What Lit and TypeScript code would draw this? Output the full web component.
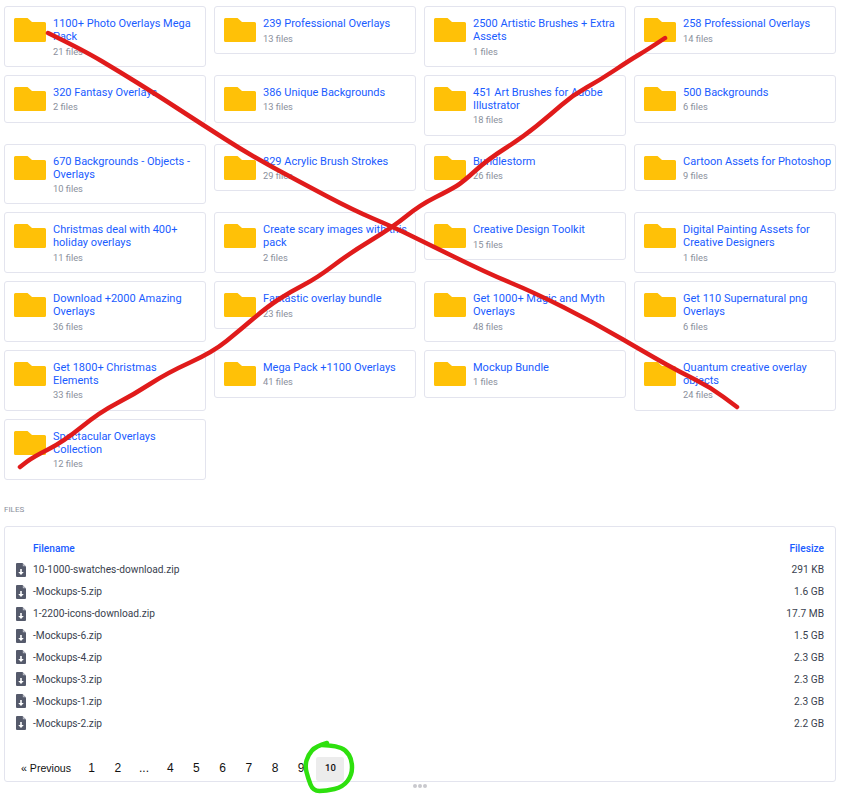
import { LitElement, html, css, svg } from "lit";
import { customElement } from "lit/decorators.js";

const folders: [string, number][] = [
  ["1100+ Photo Overlays Mega Pack", 21],
  ["239 Professional Overlays", 13],
  ["2500 Artistic Brushes + Extra Assets", 1],
  ["258 Professional Overlays", 14],
  ["320 Fantasy Overlays", 2],
  ["386 Unique Backgrounds", 13],
  ["451 Art Brushes for Adobe Illustrator", 18],
  ["500 Backgrounds", 6],
  ["670 Backgrounds - Objects - Overlays", 10],
  ["829 Acrylic Brush Strokes", 29],
  ["Bundlestorm", 26],
  ["Cartoon Assets for Photoshop", 9],
  ["Christmas deal with 400+ holiday overlays", 11],
  ["Create scary images with this pack", 2],
  ["Creative Design Toolkit", 15],
  ["Digital Painting Assets for Creative Designers", 1],
  ["Download +2000 Amazing Overlays", 36],
  ["Fantastic overlay bundle", 23],
  ["Get 1000+ Magic and Myth Overlays", 48],
  ["Get 110 Supernatural png Overlays", 6],
  ["Get 1800+ Christmas Elements", 33],
  ["Mega Pack +1100 Overlays", 41],
  ["Mockup Bundle", 1],
  ["Quantum creative overlay objects", 24],
  ["Spectacular Overlays Collection", 12],
];

const files: [string, string][] = [
  ["10-1000-swatches-download.zip", "291 KB"],
  ["-Mockups-5.zip", "1.6 GB"],
  ["1-2200-icons-download.zip", "17.7 MB"],
  ["-Mockups-6.zip", "1.5 GB"],
  ["-Mockups-4.zip", "2.3 GB"],
  ["-Mockups-3.zip", "2.3 GB"],
  ["-Mockups-1.zip", "2.3 GB"],
  ["-Mockups-2.zip", "2.2 GB"],
];

const pages = ["1", "2", "...", "4", "5", "6", "7", "8", "9"];

// hand drawn marks on top of the page
const redA = [[48,33],[83,50],[120,72],[157,95],[200,123],[250,155],[300,182],[353,210],[393,227],[420,240],[487,273],[533,292],[593,322],[653,357],[680,372],[710,387],[737,407]];
const redB = [[665,38],[647,50],[630,60],[600,80],[573,95],[550,115],[523,137],[487,160],[463,182],[450,190],[420,205],[393,227],[350,253],[317,278],[290,292],[267,307],[240,330],[213,352],[167,373],[133,395],[100,412],[63,442],[33,457],[20,467]];
const green = [[327,743],[316,746],[308,755],[305,766],[308,778],[313,791],[326,791],[343,787],[352,775],[352,760],[346,750],[336,746],[322,745]];

function smooth(pts: number[][]) {
  let d = `M${pts[0][0]} ${pts[0][1]}`;
  for (let i = 1; i < pts.length - 1; i++) {
    const mx = (pts[i][0] + pts[i + 1][0]) / 2;
    const my = (pts[i][1] + pts[i + 1][1]) / 2;
    d += ` Q${pts[i][0]} ${pts[i][1]} ${mx} ${my}`;
  }
  const last = pts[pts.length - 1];
  return d + ` L${last[0]} ${last[1]}`;
}

const folderIcon = html`<svg class="folder" viewBox="0 0 32 24">
  <path d="M1.5 0H13.5L18 4H30.5A1.5 1.5 0 0 1 32 5.5V22.500A1.5 1.5 0 0 1 30.5 24H1.5A1.5 1.5 0 0 1 0 22.500V1.500A1.5 1.5 0 0 1 1.500 0Z" fill="#ffc107"/>
</svg>`;

const fileIcon = html`<svg class="file" viewBox="0 0 10 14">
  <path d="M1 0H6.500L10 3.500V13A1 1 0 0 1 9 14H1A1 1 0 0 1 0 13V1A1 1 0 0 1 1 0Z" fill="#555a6b"/>
  <path d="M6.800 0.400L9.600 3.200H6.800Z" fill="#b9bcc6"/>
  <path d="M4.200 6H5.800V9H7.800L5 12L2.200 9H4.200Z" fill="#fff"/>
</svg>`;

@customElement("app-root")
export class AppRoot extends LitElement {
  static styles = css`
    :host {
      display: block;
      position: relative;
      width: 845px;
      height: 796px;
      overflow: hidden;
      background: #fff;
      font-family: Roboto, "Liberation Sans", sans-serif;
    }
    .page {
      padding: 6px 9px 0 4px;
    }
    .grid {
      display: grid;
      grid-template-columns: repeat(4, 202px);
      column-gap: 8px;
      row-gap: 8px;
      align-items: start;
    }
    .card {
      display: flex;
      gap: 7px;
      padding: 10px 2px 8.3px 9px;
      border: 1px solid #e3e4ee;
      border-radius: 3px;
      box-sizing: border-box;
    }
    .folder {
      flex: none;
      width: 32px;
      height: 24px;
      margin-top: 1px;
    }
    .name {
      font-size: 11px;
      line-height: 13px;
      color: #1a5cff;
    }
    .count {
      font-size: 9.3px;
      line-height: 12px;
      margin-top: 2.5px;
      color: #8a8f9c;
    }
    .label {
      margin: 24px 0 0;
      font-size: 8px;
      line-height: 12px;
      color: #8a8f9c;
      text-transform: uppercase;
    }
    .files {
      margin-top: 10.5px;
      height: 256px;
      box-sizing: border-box;
      padding: 10px 11px 0 10px;
      border: 1px solid #e3e4ee;
      border-radius: 3px;
      display: flex;
      flex-direction: column;
    }
    .row {
      display: flex;
      align-items: center;
      justify-content: space-between;
      height: 21.9px;
      flex: none;
      font-size: 10.2px;
      color: #3a3f4f;
    }
    .row.head {
      font-weight: 500;
      color: #1a5cff;
    }
    .left {
      display: flex;
      align-items: center;
      gap: 7px;
      padding-left: 1px;
    }
    .head .left {
      padding-left: 18px;
    }
    .file {
      width: 10px;
      height: 14px;
      flex: none;
    }
    .pager {
      display: flex;
      align-items: flex-start;
      margin-top: auto;
      padding-left: 6px;
      font-family: "Liberation Sans", Arial, sans-serif;
      font-size: 12px;
      line-height: 22px;
      color: #111;
    }
    .pager span {
      width: 26.2px;
      text-align: center;
    }
    .pager .prev {
      width: auto;
      margin-right: 7.5px;
      font-size: 10.6px;
    }
    .pager .current {
      width: 28px;
      height: 24px;
      margin-left: 2.2px;
      border-radius: 2px;
      background: #ececec;
      font-size: 9.5px;
      font-family: Roboto, sans-serif;
      font-weight: 500;
    }
    .handle {
      display: flex;
      justify-content: center;
      gap: 1px;
      margin-top: 2px;
    }
    .handle i {
      width: 4px;
      height: 4px;
      border-radius: 50%;
      background: #c9c9ce;
    }
    .marks {
      position: absolute;
      inset: 0;
      width: 845px;
      height: 796px;
      pointer-events: none;
    }
  `;

  render() {
    return html`
      <div class="page">
        <div class="grid">
          ${folders.map(
            ([name, n]) => html`<div class="card">
              ${folderIcon}
              <div>
                <div class="name">${name}</div>
                <div class="count">${n} files</div>
              </div>
            </div>`
          )}
        </div>
        <div class="label">Files</div>
        <div class="files">
          <div class="row head">
            <div class="left">Filename</div>
            <div>Filesize</div>
          </div>
          ${files.map(
            ([name, size]) => html`<div class="row">
              <div class="left">${fileIcon}${name}</div>
              <div>${size}</div>
            </div>`
          )}
          <div class="pager">
            <span class="prev">« Previous</span>
            ${pages.map((p) => html`<span>${p}</span>`)}
            <span class="current">10</span>
          </div>
        </div>
        <div class="handle"><i></i><i></i><i></i></div>
      </div>
      <svg class="marks" viewBox="0 0 845 796" fill="none" stroke-linecap="round" stroke-linejoin="round">
        ${svg`<path d=${smooth(redA)} stroke="#e01b1b" stroke-width="4.5"/>`}
        ${svg`<path d=${smooth(redB)} stroke="#e01b1b" stroke-width="4.5"/>`}
        ${svg`<path d=${smooth(green)} stroke="#2ee00e" stroke-width="4.5"/>`}
      </svg>
    `;
  }
}
